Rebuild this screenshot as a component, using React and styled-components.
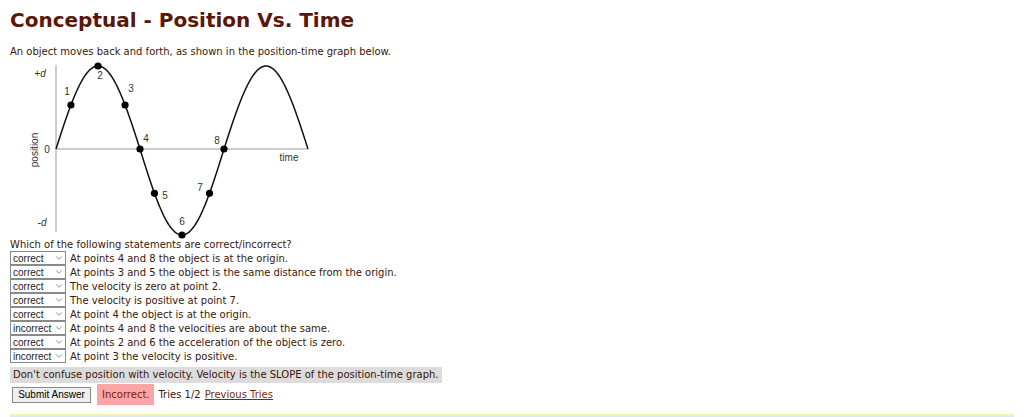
import styled, { createGlobalStyle } from "styled-components";
import { ChevronDown } from "lucide-react";

const GlobalStyle = createGlobalStyle`
  body {
    margin: 0;
    background: #fff;
    font-family: "DejaVu Sans", Verdana, sans-serif;
    color: #3a1708;
  }
`;

const Page = styled.div`
  padding: 0 10px;
`;

const Title = styled.h1`
  margin: 0;
  padding-top: 8px;
  font-size: 20px;
  line-height: 24px;
  font-weight: bold;
  color: #5a1606;
`;

const Text = styled.p`
  margin: ${(p) => p.$margin || "0"};
  font-size: 10px;
  line-height: 13px;
`;

const Graph = styled.svg`
  display: block;
  overflow: visible;
  font-family: "Liberation Sans", Arial, sans-serif;
`;

const List = styled.div`
  display: flex;
  flex-direction: column;
`;

const Row = styled.div`
  display: flex;
  align-items: center;
  height: 14px;
  gap: 4px;
`;

const SelectBox = styled.div`
  display: flex;
  align-items: center;
  width: 54px;
  height: 12px;
  border: 1px solid #8a8a8a;
  background: #fff;
  svg {
    flex: none;
    margin-right: 1px;
  }
`;

const Select = styled.select`
  appearance: none;
  flex: 1;
  min-width: 0;
  border: none;
  background: transparent;
  padding: 0 0 0 2px;
  margin: 0;
  height: 12px;
  font-family: "Liberation Sans", Arial, sans-serif;
  font-size: 10px;
  color: #222;
  outline: none;
`;

const Statement = styled.span`
  font-size: 10px;
  white-space: nowrap;
`;

const Hint = styled.div`
  display: inline-block;
  margin-top: 0;
  padding: 2px 3px;
  background: #dcdcdc;
  font-size: 10px;
  line-height: 12px;
`;

const Footer = styled.div`
  display: flex;
  align-items: center;
  margin-top: 1px;
  font-size: 10px;
`;

const Button = styled.button`
  margin: 0 6px 0 2px;
  padding: 0 4px;
  height: 16px;
  width: 79px;
  border: 1px solid #8a8a8a;
  background: #efefef;
  font-family: "Liberation Sans", Arial, sans-serif;
  font-size: 10px;
  color: #000;
`;

const Badge = styled.span`
  display: inline-flex;
  align-items: center;
  height: 21px;
  padding: 0 5px;
  background: #fca5a5;
  color: #7a1a0a;
`;

const Tries = styled.span`
  margin-left: 4px;
`;

const Link = styled.a`
  margin-left: 4px;
  color: #7a2a0a;
  text-decoration: underline;
`;

const BottomBar = styled.div`
  margin-top: 9px;
  height: 3px;
  border-top: 2px solid #f2f2b0;
  background: #dde9f2;
`;

const rows = [
  ["correct", "At points 4 and 8 the object is at the origin."],
  ["correct", "At points 3 and 5 the object is the same distance from the origin."],
  ["correct", "The velocity is zero at point 2."],
  ["correct", "The velocity is positive at point 7."],
  ["correct", "At point 4 the object is at the origin."],
  ["incorrect", "At points 4 and 8 the velocities are about the same."],
  ["correct", "At points 2 and 6 the acceleration of the object is zero."],
  ["incorrect", "At point 3 the velocity is positive."],
];

// curve: origin at (46, 91), period 168px
const X0 = 46;
const Y0 = 91;
const PERIOD = 168;
const curveY = (deg) => {
  const s = Math.sin((deg * Math.PI) / 180);
  return Y0 - s * (s > 0 ? 83 : 86);
};
const curveX = (deg) => X0 + (deg / 360) * PERIOD;

const curvePath = () => {
  const pts = [];
  for (let d = 0; d <= 540; d += 3) {
    pts.push(`${curveX(d).toFixed(2)},${curveY(d).toFixed(2)}`);
  }
  return "M" + pts.join(" L");
};

const dots = [32, 90, 148, 180, 211, 270, 329, 360];
const labels = [
  ["1", 57, 33],
  ["2", 90, 17],
  ["3", 121, 30],
  ["4", 136, 80],
  ["5", 155, 137],
  ["6", 172, 163],
  ["7", 190, 129],
  ["8", 207, 82],
];

const PositionGraph = () => (
  <Graph width="300" height="180" viewBox="0 0 300 180">
    <line x1="46" y1="7" x2="46" y2="174" stroke="#bbb" strokeWidth="1.5" />
    <line x1="46" y1="91" x2="298" y2="91" stroke="#bbb" strokeWidth="1.5" />
    <path d={curvePath()} fill="none" stroke="#111" strokeWidth="1.5" />
    {dots.map((d) => (
      <circle key={d} cx={curveX(d)} cy={curveY(d)} r="3.6" fill="#000" />
    ))}
    <g fontSize="10" fill="#333" textAnchor="middle" dominantBaseline="central">
      {labels.map(([t, x, y]) => (
        <text key={t} x={x} y={y}>{t}</text>
      ))}
      <text x="30" y="15" fontStyle="italic">+d</text>
      <text x="37" y="91">0</text>
      <text x="32" y="164" fontStyle="italic">-d</text>
      <text x="279" y="99">time</text>
      <text x="24" y="92" transform="rotate(-90 24 92)">position</text>
    </g>
  </Graph>
);

const App = () => (
  <Page>
    <GlobalStyle />
    <Title>Conceptual - Position Vs. Time</Title>
    <Text $margin="13px 0 0 0">
      An object moves back and forth, as shown in the position-time graph below.
    </Text>
    <PositionGraph />
    <Text>Which of the following statements are correct/incorrect?</Text>
    <List>
      {rows.map(([value, text], i) => (
        <Row key={i}>
          <SelectBox>
            <Select defaultValue={value}>
              <option value="correct">correct</option>
              <option value="incorrect">incorrect</option>
            </Select>
            <ChevronDown size={10} strokeWidth={1.6} color="#555" />
          </SelectBox>
          <Statement>{text}</Statement>
        </Row>
      ))}
    </List>
    <Hint>
      Don't confuse position with velocity. Velocity is the SLOPE of the
      position-time graph.
    </Hint>
    <Footer>
      <Button>Submit Answer</Button>
      <Badge>Incorrect.</Badge>
      <Tries>Tries 1/2</Tries>
      <Link href="#">Previous Tries</Link>
    </Footer>
    <BottomBar />
  </Page>
);

export default App;
